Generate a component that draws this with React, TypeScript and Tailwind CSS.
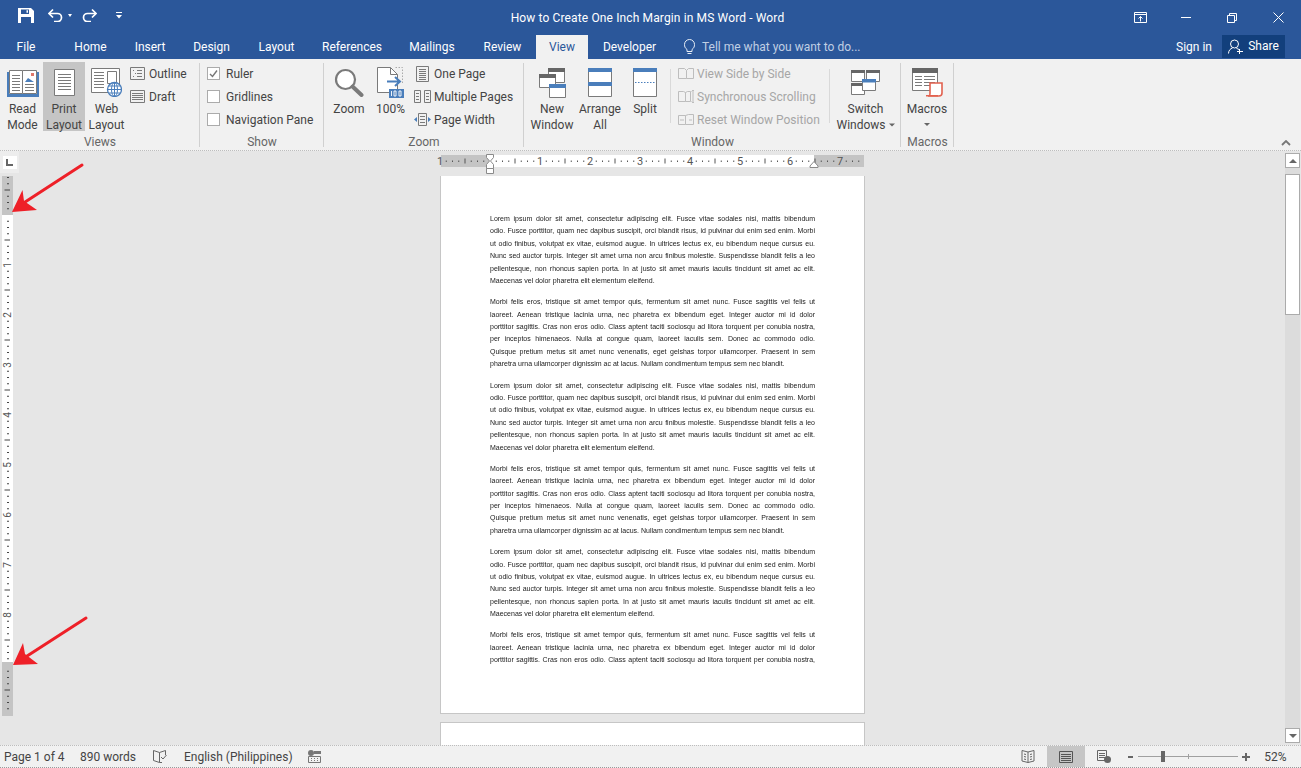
import React from 'react';

const GRAY = '#7a7a7a';
const BLUE = '#4a7ebb';

const LOREM = [
  'Lorem ipsum dolor sit amet, consectetur adipiscing elit. Fusce vitae sodales nisi, mattis bibendum',
  'odio. Fusce porttitor, quam nec dapibus suscipit, orci blandit risus, id pulvinar dui enim sed enim. Morbi',
  'ut odio finibus, volutpat ex vitae, euismod augue. In ultrices lectus ex, eu bibendum neque cursus eu.',
  'Nunc sed auctor turpis. Integer sit amet urna non arcu finibus molestie. Suspendisse blandit felis a leo',
  'pellentesque, non rhoncus sapien porta. In at justo sit amet mauris iaculis tincidunt sit amet ac elit.',
  'Maecenas vel dolor pharetra elit elementum eleifend.',
];
const MORBI = [
  'Morbi felis eros, tristique sit amet tempor quis, fermentum sit amet nunc. Fusce sagittis vel felis ut',
  'laoreet. Aenean tristique lacinia urna, nec pharetra ex bibendum eget. Integer auctor mi id dolor',
  'porttitor sagittis. Cras non eros odio. Class aptent taciti sociosqu ad litora torquent per conubia nostra,',
  'per inceptos himenaeos. Nulla at congue quam, laoreet iaculis sem. Donec ac commodo odio.',
  'Quisque pretium metus sit amet nunc venenatis, eget gelshas torpor ullamcorper. Praesent in sem',
  'pharetra urna ullamcorper dignissim ac at lacus. Nullam condimentum tempus sem nec blandit.',
];

const TABS = [
  { label: 'Home', w: 'w-[61px]' },
  { label: 'Insert', w: 'w-[58px]' },
  { label: 'Design', w: 'w-[65px]' },
  { label: 'Layout', w: 'w-[65px]' },
  { label: 'References', w: 'w-[86px]' },
  { label: 'Mailings', w: 'w-[74px]' },
  { label: 'Review', w: 'w-[67px]' },
];

const Ico: React.FC<{ w: number; h: number; children: React.ReactNode }> = ({ w, h, children }) => (
  <svg width={w} height={h} viewBox={`0 0 ${w} ${h}`} fill="none" className="shrink-0">
    {children}
  </svg>
);

const Lines: React.FC<{ x1: number; x2: number; ys: number[]; c?: string }> = ({ x1, x2, ys, c = GRAY }) => (
  <>
    {ys.map((y) => (
      <path key={y} d={`M${x1} ${y + 0.5}H${x2}`} stroke={c} />
    ))}
  </>
);

const BigButton: React.FC<{ lines: string[]; w: string; icon: React.ReactNode; active?: boolean; caret?: boolean }> = ({
  lines,
  w,
  icon,
  active,
  caret,
}) => (
  <div className={`flex flex-col items-center h-[69px] shrink-0 ${w} ${active ? 'bg-[#c5c5c5]' : ''}`}>
    <div className="h-[38px] shrink-0 flex items-center justify-center pt-[3px]">{icon}</div>
    {lines.map((l) => (
      <div key={l} className="h-[16px] shrink-0 leading-[16px] whitespace-nowrap translate-y-[0.5px]">
        {l}
      </div>
    ))}
    {caret && (
      <div className="h-[16px] shrink-0 flex items-center">
        <div className="border-x-[3px] border-x-transparent border-t-[3px] border-t-[#666]" />
      </div>
    )}
  </div>
);

const SmallItem: React.FC<{ icon: React.ReactNode; label: string; iconW: string; disabled?: boolean }> = ({
  icon,
  label,
  iconW,
  disabled,
}) => (
  <div className={`h-[23px] flex items-center whitespace-nowrap ${disabled ? 'text-[#a6a6a6]' : ''}`}>
    <div className={`flex justify-start shrink-0 ${iconW}`}>{icon}</div>
    <span>{label}</span>
  </div>
);

const Check: React.FC<{ label: string; on?: boolean }> = ({ label, on }) => (
  <div className="h-[23px] flex items-center gap-[6px] whitespace-nowrap">
    <div className="w-[13px] h-[13px] border border-[#ababab] bg-white flex items-center justify-center">
      {on && (
        <Ico w={9} h={9}>
          <path d="M1 5l2.5 2.5L8 1.5" stroke="#777" strokeWidth="1.4" />
        </Ico>
      )}
    </div>
    <span>{label}</span>
  </div>
);

const Group: React.FC<{ label: string; w: string; children: React.ReactNode }> = ({ label, w, children }) => (
  <div className={`relative shrink-0 h-full flex flex-col ${w}`}>
    <div className="flex h-[76px] pt-[3px]">{children}</div>
    <div className="h-[15px] leading-[15px] text-center text-[#666]">{label}</div>
    <div className="absolute right-0 top-[4px] h-[84px] w-px bg-[#d0d0d0]" />
  </div>
);

const Sep = () => <div className="w-px h-[54px] mt-[7px] bg-[#d9d9d9] shrink-0" />;

const ReadIcon = () => (
  <Ico w={32} h={28}>
    <path d="M0 3h2v22h28V3h2v25H0z" fill={BLUE} />
    <path d="M2.5 1.5h13v23h-13zM15.5 1.5l14 0v23h-14" fill="#fff" stroke={GRAY} />
    <Lines x1={5} x2={13} ys={[6, 9, 12, 15, 18, 21]} />
    <Lines x1={18} x2={27} ys={[15, 18, 21]} />
    <path d="M18 13l3-4 3 2 3 2z" fill={BLUE} />
    <path d="M24 4h3v3h-3z" fill="#e0776a" />
  </Ico>
);

const PrintIcon = () => (
  <Ico w={21} h={27}>
    <path d="M.5.5h20v26H.5z" fill="#fff" stroke={GRAY} />
    <Lines x1={4} x2={17} ys={[5, 8, 11, 14, 17, 20]} />
  </Ico>
);

const WebIcon = () => (
  <Ico w={31} h={29}>
    <path d="M.5.5h28v24H.5z" fill="#fff" stroke={GRAY} />
    <Lines x1={3} x2={13} ys={[4, 7, 10, 13, 16, 19]} />
    <path d="M16.5 3.5h9v12h-9z" stroke={GRAY} />
    <circle cx="23.5" cy="21.5" r="7" fill="#fff" stroke={BLUE} strokeWidth="1.3" />
    <path d="M16.5 21.5h14M23.5 14.5v14M18 18h11M18 25h11" stroke={BLUE} />
    <ellipse cx="23.5" cy="21.5" rx="3" ry="7" stroke={BLUE} />
  </Ico>
);

const OutlineIcon = () => (
  <Ico w={15} h={13}>
    <path d="M.5.5h14v12H.5z" stroke={GRAY} />
    <Lines x1={7} x2={12} ys={[3, 6, 9]} />
    <path d="M3 3.5h1M5 6.5h1M3 9.5h1" stroke={GRAY} />
  </Ico>
);

const DraftIcon = () => (
  <Ico w={15} h={13}>
    <path d="M.5.5h14v12H.5z" stroke={GRAY} />
    <Lines x1={2} x2={13} ys={[3, 5, 7, 9]} />
  </Ico>
);

const ZoomIcon = () => (
  <Ico w={30} h={29}>
    <circle cx="11.5" cy="11.5" r="9.5" stroke={GRAY} strokeWidth="2.2" fill="#fff" />
    <path d="M18.5 18.5L27.5 27" stroke={GRAY} strokeWidth="4" strokeLinecap="round" />
  </Ico>
);

const Zoom100Icon = () => (
  <Ico w={27} h={31}>
    <path d="M.5.5h13l7 7v18H.5z" fill="#fff" stroke={GRAY} />
    <path d="M13.5.5v7h7" stroke={GRAY} />
    <path d="M18.5.5h7v16" stroke="#aaa" strokeDasharray="1.5 1.5" />
    <path d="M10 14.5h13M18 10l5 4.5-5 4.5" stroke={BLUE} strokeWidth="2" />
    <path d="M12 22h15v9H12z" fill={BLUE} />
    <path d="M14.5 24v5M17 24h2v5h-2zM22 24h2v5h-2z" stroke="#fff" strokeWidth=".9" />
  </Ico>
);

const OnePageIcon = () => (
  <Ico w={13} h={16}>
    <path d="M.5.5h12v15H.5z" stroke={GRAY} />
    <Lines x1={3} x2={10} ys={[3, 5, 7, 9, 11, 13]} />
  </Ico>
);

const MultiPageIcon = () => (
  <Ico w={17} h={13}>
    <path d="M.5.5h6v12h-6zM10.5.5h6v12h-6z" stroke={GRAY} />
    <Lines x1={2} x2={5} ys={[3, 6, 9]} />
    <Lines x1={12} x2={15} ys={[3, 6, 9]} />
  </Ico>
);

const PageWidthIcon = () => (
  <Ico w={17} h={13}>
    <path d="M4.5.5h8v12h-8z" stroke={GRAY} />
    <Lines x1={6} x2={11} ys={[3, 6, 9]} />
    <path d="M0 6.5L3 4v5zM17 6.5L14 4v5z" fill={BLUE} />
  </Ico>
);

const NewWindowIcon = () => (
  <Ico w={27} h={31}>
    <path d="M9.5 1.5h16v14h-16z" fill="#fff" stroke={GRAY} />
    <path d="M9 1h17v4H9z" fill="#666" />
    <path d="M.5 7.5h16v13H.5z" fill="#fff" stroke={GRAY} />
    <path d="M0 7h17v4H0z" fill="#666" />
    <path d="M10.5 17.5h16v13h-16z" fill="#fff" stroke={GRAY} />
    <path d="M10 17h17v4H10z" fill={BLUE} />
  </Ico>
);

const ArrangeIcon = () => (
  <Ico w={24} h={29}>
    <path d="M.5.5h23v28H.5z" fill="#fff" stroke={GRAY} />
    <path d="M0 0h24v4H0zM0 14h24v4H0z" fill={BLUE} />
  </Ico>
);

const SplitIcon = () => (
  <Ico w={24} h={29}>
    <path d="M.5.5h23v28H.5z" fill="#fff" stroke={GRAY} />
    <path d="M0 0h24v4H0z" fill={BLUE} />
    <path d="M2 14.5h20" stroke={BLUE} strokeDasharray="1.5 1.5" />
  </Ico>
);

const SideBySideIcon = () => (
  <Ico w={16} h={11}>
    <path d="M.5.5h6l2 2v8h-8zM8.5 2.5l2-2h5v10h-7" stroke="#bdbdbd" />
  </Ico>
);

const SyncIcon = () => (
  <Ico w={16} h={15}>
    <path d="M.5 2.5h5l2 1v9h-7zM7.5 3.5l2-1h3v10h-5" stroke="#bdbdbd" />
    <path d="M15 1v13M13.5 2.5L15 1l1.5 1.5M13.5 12.5L15 14l1.5-1.5" stroke="#bdbdbd" />
  </Ico>
);

const ResetIcon = () => (
  <Ico w={16} h={12}>
    <path d="M.5 1.5h7v9h-7zM7.5 1.5l3-1h5v10h-8" stroke="#bdbdbd" />
    <path d="M2 6h4M11 6h3" stroke="#bdbdbd" />
  </Ico>
);

const SwitchIcon = () => (
  <Ico w={29} h={25}>
    <path d="M.5.5h13v11H.5zM15.5.5h13v11h-13zM.5 13.5h13v11H.5z" fill="#fff" stroke={GRAY} />
    <path d="M0 0h14v3H0zM15 0h14v3H15zM0 13h14v3H0z" fill="#666" />
    <path d="M11.5 9.5h13v11h-13z" fill="#fff" stroke={GRAY} />
    <path d="M11 9h14v3.5H11z" fill={BLUE} />
  </Ico>
);

const MacrosIcon = () => (
  <Ico w={31} h={29}>
    <path d="M.5.5h25v22H.5z" fill="#fff" stroke={GRAY} />
    <path d="M0 0h26v5H0z" fill="#666" />
    <Lines x1={3} x2={10} ys={[8, 11, 14, 17]} />
    <Lines x1={12} x2={23} ys={[8, 11, 14, 17]} />
    <path d="M18 15h12v10c0 2-1 3-3 3h-11c2 0 2-1 2-3z" fill="#fff" stroke="#e2614f" strokeWidth="1.6" />
    <path d="M14 27h12v1.5H14z" fill="#e2614f" />
  </Ico>
);

const HRuler = () => {
  // one inch = 50px, 0 sits at x=49 inside the page column
  const ticks: number[] = [];
  for (let i = -7; i <= 60; i++) ticks.push(i);
  const labels = [
    [-1, 1],
    [1, 1],
    [2, 2],
    [3, 3],
    [4, 4],
    [5, 5],
    [6, 6],
    [7, 7],
  ];
  return (
    <svg width="429" height="24" viewBox="0 0 429 24" className="overflow-visible ml-[1px]">
      <path d="M0 4h49v12H0zM373 4h50v12h-50z" fill="#c4c4c4" />
      <path d="M49 4h324v12H49z" fill="#fff" />
      {ticks.map((i) => {
        if (i % 8 === 0) return null;
        const x = 49 + i * 6.25;
        if (x < 2 || x > 421) return null;
        const half = i % 4 === 0;
        return <path key={i} d={`M${x} ${half ? 7.5 : 9.5}v${half ? 5 : 1.5}`} stroke="#555" strokeWidth="1" />;
      })}
      {labels.map(([n, label]) => (
        <text key={n} x={49 + n * 50} y="13.5" textAnchor="middle" fontSize="11" fill="#555">
          {label}
        </text>
      ))}
      <path d="M45.5 3.5h7v3l-3 3.5 3 3.5v4h-7v-4l3-3.5-3-3.5z" fill="#fff" stroke="#8a8a8a" />
      <path d="M45.5 17.5h7v5h-7z" fill="#fff" stroke="#8a8a8a" />
      <path d="M373 10.5l4 4.5v1.5h-8V15z" fill="#fff" stroke="#8a8a8a" />
    </svg>
  );
};

const VRuler = () => {
  const ticks: number[] = [];
  for (let i = -6; i <= 80; i++) ticks.push(i);
  return (
    <svg width="11" height="540" viewBox="0 0 11 540">
      <path d="M0 0h11v540H0z" fill="#c4c4c4" />
      <path d="M0 39h11v447H0z" fill="#fff" />
      {ticks.map((i) => {
        if (i % 8 === 0) return null;
        const y = 39 + i * 6.25;
        if (y < 1 || y > 538) return null;
        const half = i % 4 === 0;
        return <path key={i} d={`M${half ? 2.5 : 5} ${y}h${half ? 5.5 : 2}`} stroke="#444" />;
      })}
      {[1, 2, 3, 4, 5, 6, 7, 8].map((n) => (
        <text
          key={n}
          x="5.5"
          y={39 + n * 50}
          fontSize="10"
          fill="#555"
          textAnchor="middle"
          dominantBaseline="central"
          transform={`rotate(-90 5.5 ${39 + n * 50})`}
        >
          {n}
        </text>
      ))}
    </svg>
  );
};

const Para: React.FC<{ lines: string[]; cut?: boolean }> = ({ lines, cut }) => (
  <div className="mb-[8.95px]">
    {lines.map((l, i) => (
      <div
        key={i}
        className={
          i === lines.length - 1 && !cut
            ? 'h-[12.4px] leading-[12.4px]'
            : 'h-[12.4px] leading-[12.4px] text-justify [text-align-last:justify]'
        }
      >
        {l}
      </div>
    ))}
  </div>
);

const ScrollBtn: React.FC<{ up?: boolean }> = ({ up }) => (
  <div className="w-[15px] h-[15px] bg-white border border-[#ababab] flex items-center justify-center shrink-0">
    <div
      className={
        up
          ? 'border-x-[4px] border-x-transparent border-b-[4px] border-b-[#666]'
          : 'border-x-[4px] border-x-transparent border-t-[4px] border-t-[#666]'
      }
    />
  </div>
);

export default function App() {
  return (
    <div className="w-[1301px] h-[768px] overflow-hidden relative flex flex-col bg-[#e6e6e6] text-[#444] text-[12px] font-['Roboto','Noto_Sans',sans-serif]">
      {/* title bar */}
      <div className="h-[35px] bg-[#2b579a] text-white flex items-center shrink-0">
        <div className="w-[178px] flex items-center pl-[18px] pb-[5px]">
          <Ico w={16} h={15}>
            <path d="M0 0h13l3 3v12H0z" fill="#fff" />
            <path d="M3 1.5h8v4.5H3z" fill="#2b579a" />
            <path d="M3 9h10v6H3z" fill="#2b579a" />
            <path d="M8.5 2.3h1.5v2.5H8.5z" fill="#fff" />
          </Ico>
          <div className="w-[14px]" />
          <Ico w={15} h={14}>
            <path d="M1.5 5.5h8a4 4 0 010 8H6" stroke="#fff" strokeWidth="1.7" />
            <path d="M5 1.5l-4 4 4 4" stroke="#fff" strokeWidth="1.7" />
          </Ico>
          <div className="ml-[5px] border-x-[2.5px] border-x-transparent border-t-[3px] border-t-white" />
          <div className="w-[10px]" />
          <Ico w={15} h={14}>
            <path d="M13.5 5.5h-8a4 4 0 000 8H9" stroke="#fff" strokeWidth="1.7" />
            <path d="M10 1.5l4 4-4 4" stroke="#fff" strokeWidth="1.7" />
          </Ico>
          <div className="w-[19px]" />
          <Ico w={6} h={7}>
            <path d="M0 0h6v1H0z" fill="#fff" />
            <path d="M0 3h6L3 6.5z" fill="#fff" />
          </Ico>
        </div>
        <div className="flex-1 text-center whitespace-nowrap tracking-[0.13px]">How to Create One Inch Margin in MS Word - Word</div>
        <div className="w-[184px] flex h-full">
          <div className="w-[46px] flex items-center justify-center">
            <Ico w={13} h={11}>
              <path d="M.5.5h12v10H.5zM0 2.5h13" stroke="#fff" />
              <path d="M6.5 9.5V4.5M4.5 6.5l2-2 2 2" stroke="#fff" />
            </Ico>
          </div>
          <div className="w-[46px] flex items-center justify-center">
            <div className="w-[10px] h-px bg-white" />
          </div>
          <div className="w-[46px] flex items-center justify-center">
            <Ico w={10} h={10}>
              <path d="M.5 2.5h7v7h-7zM2.5 2.5v-2h7v7h-2" stroke="#fff" />
            </Ico>
          </div>
          <div className="w-[46px] flex items-center justify-center">
            <Ico w={11} h={11}>
              <path d="M.5.5l10 10M10.5.5l-10 10" stroke="#fff" />
            </Ico>
          </div>
        </div>
      </div>

      {/* tabs */}
      <div className="h-[24px] bg-[#2b579a] text-white flex shrink-0 leading-[25px]">
        <div className="w-[52px] text-center">File</div>
        <div className="w-[8px]" />
        {TABS.map((t) => (
          <div key={t.label} className={`text-center ${t.w}`}>
            {t.label}
          </div>
        ))}
        <div className="w-[52px] bg-[#f1f1f1] text-[#2b579a] text-center">View</div>
        <div className="w-[83px] text-center">Developer</div>
        <div className="flex items-center ml-[13px] text-[#c0cfe4]">
          <Ico w={11} h={16}>
            <path d="M3 10.5C1 9 .5 7.5.5 5.5a5 5 0 0110 0c0 2-.5 3.5-2.5 5v2H3zM3.5 14.5h4" stroke="#e8eef6" />
          </Ico>
          <span className="ml-[7px]">Tell me what you want to do...</span>
        </div>
        <div className="flex-1" />
        <div className="mr-[10px]">Sign in</div>
        <div className="w-[63px] h-[23px] mr-[16px] bg-[#123f7c] flex items-center justify-center gap-[5px]">
          <Ico w={15} h={15}>
            <circle cx="6.5" cy="5" r="4" stroke="#fff" />
            <path d="M.5 14.5c0-3 2-5 4-5.5M8.5 9.5c1 .2 2 .6 2.5 1M11.5 10v5M9 12.5h6" stroke="#fff" />
          </Ico>
          <span>Share</span>
        </div>
      </div>

      {/* ribbon */}
      <div className="h-[92px] bg-[#f1f1f1] flex shrink-0 relative border-b border-dotted border-[#bdbdbd]">
        <Group label="Views" w="w-[200px]">
          <div className="w-[2px]" />
          <BigButton lines={['Read', 'Mode']} w="w-[41px]" icon={<ReadIcon />} />
          <BigButton lines={['Print', 'Layout']} w="w-[42px]" icon={<PrintIcon />} active />
          <BigButton lines={['Web', 'Layout']} w="w-[43px]" icon={<WebIcon />} />
          <div className="flex flex-col ml-[2px]">
            <SmallItem icon={<OutlineIcon />} label="Outline" iconW="w-[19px]" />
            <SmallItem icon={<DraftIcon />} label="Draft" iconW="w-[19px]" />
          </div>
        </Group>
        <Group label="Show" w="w-[124px]">
          <div className="flex flex-col pl-[7px]">
            <Check label="Ruler" on />
            <Check label="Gridlines" />
            <Check label="Navigation Pane" />
          </div>
        </Group>
        <Group label="Zoom" w="w-[200px]">
          <div className="w-[2px]" />
          <BigButton lines={['Zoom']} w="w-[46px]" icon={<ZoomIcon />} />
          <BigButton lines={['100%']} w="w-[37px]" icon={<Zoom100Icon />} />
          <div className="flex flex-col ml-[5px]">
            <SmallItem icon={<div className="pl-[2px]"><OnePageIcon /></div>} label="One Page" iconW="w-[20px]" />
            <SmallItem icon={<MultiPageIcon />} label="Multiple Pages" iconW="w-[20px]" />
            <SmallItem icon={<PageWidthIcon />} label="Page Width" iconW="w-[20px]" />
          </div>
        </Group>
        <Group label="Window" w="w-[377px]">
          <div className="w-[4px]" />
          <BigButton lines={['New', 'Window']} w="w-[48px]" icon={<NewWindowIcon />} />
          <BigButton lines={['Arrange', 'All']} w="w-[48px]" icon={<ArrangeIcon />} />
          <BigButton lines={['Split']} w="w-[42px]" icon={<SplitIcon />} />
          <div className="w-[4px]" />
          <Sep />
          <div className="w-[158px] flex flex-col pl-[7px]">
            <SmallItem icon={<SideBySideIcon />} label="View Side by Side" iconW="w-[19px]" disabled />
            <SmallItem icon={<SyncIcon />} label="Synchronous Scrolling" iconW="w-[19px]" disabled />
            <SmallItem icon={<ResetIcon />} label="Reset Window Position" iconW="w-[19px]" disabled />
          </div>
          <Sep />
          <div className="flex flex-col items-center w-[71px]">
            <div className="h-[38px] shrink-0 flex items-center justify-center pt-[3px]">
              <SwitchIcon />
            </div>
            <div className="h-[16px] leading-[16px] translate-y-[0.5px]">Switch</div>
            <div className="h-[16px] leading-[16px] translate-y-[0.5px] flex items-center gap-[3px] whitespace-nowrap">
              Windows
              <div className="border-x-[3px] border-x-transparent border-t-[3px] border-t-[#666]" />
            </div>
          </div>
        </Group>
        <Group label="Macros" w="w-[53px]">
          <BigButton lines={['Macros']} w="w-[52px]" icon={<MacrosIcon />} caret />
        </Group>
        <div className="flex-1 flex items-end justify-end pr-[10px] pb-[4px]">
          <Ico w={10} h={6}>
            <path d="M1 5l4-4 4 4" stroke="#777" strokeWidth="1.8" />
          </Ico>
        </div>
      </div>

      {/* document area */}
      <div className="flex-1 min-h-0 flex">
        <div className="w-[20px] shrink-0 flex flex-col pl-[2px]">
          <div className="h-[25px] shrink-0 flex items-start">
            <div className="w-[19px] h-[22px] -ml-[2px] bg-[#ededed] flex items-center justify-center">
              <div className="w-[14px] h-[13px] bg-white flex items-center justify-center">
                <Ico w={7} h={7}>
                  <path d="M0 0h2v5h5v2H0z" fill="#666" />
                </Ico>
              </div>
            </div>
          </div>
          <VRuler />
        </div>
        <div className="flex-1 min-w-0 flex flex-col items-center overflow-hidden">
          <div className="w-[425px] h-[25px] shrink-0">
            <HRuler />
          </div>
          <div className="w-[425px] h-[538px] shrink-0 bg-white border border-[#c6c6c6] border-t-0 pl-[49px] pr-[49px] pt-[37px] text-[#1a1a1a] text-[7px] font-['Liberation_Sans',Arial,sans-serif] [will-change:transform]">
            <Para lines={LOREM} />
            <Para lines={MORBI} />
            <Para lines={LOREM} />
            <Para lines={MORBI} />
            <Para lines={LOREM} />
            <Para lines={MORBI.slice(0, 3)} cut />
          </div>
          <div className="w-[425px] h-[100px] mt-[8px] shrink-0 bg-white border border-[#c6c6c6]" />
        </div>
        <div className="w-[16px] shrink-0 flex flex-col pt-[2px] pr-px bg-[#e6e6e6]">
          <ScrollBtn up />
          <div className="flex-1 bg-[#dcdcdc] pt-[6px]">
            <div className="h-[141px] bg-white border border-[#ababab]" />
          </div>
          <ScrollBtn />
          <div className="h-[2px]" />
        </div>
      </div>

      {/* status bar */}
      <div className="h-[23px] shrink-0 bg-[#f1f1f1] border-t border-dotted border-[#bdbdbd] border-b-[1px] border-b-[#9a9a9a] flex items-center pl-[4px]">
        <span className="whitespace-nowrap w-[76px]">Page 1 of 4</span>
        <span className="whitespace-nowrap w-[73px]">890 words</span>
        <div className="w-[31px]">
          <Ico w={14} h={13}>
            <path d="M6.5 12.5l-6-2V.5l6 2zM6.5 2.5l6-2V5M6.5 12.5H9" stroke="#666" />
            <path d="M8 7l2 2 3.5-4" stroke="#666" />
          </Ico>
        </div>
        <span className="whitespace-nowrap w-[124px]">English (Philippines)</span>
        <Ico w={13} h={13}>
          <circle cx="3" cy="3" r="3" fill="#777" />
          <path d="M6 1h7v3H6z" fill="#777" />
          <path d="M.5 6.5h12v6H.5z" stroke="#777" />
          <path d="M3 8.5h1M6 8.5h1M9 8.5h1M3 10.5h1M6 10.5h1M9 10.5h1" stroke="#777" />
        </Ico>
        <div className="flex-1" />
        <Ico w={14} h={13}>
          <path d="M7 12.5l-6-1.5V.5l6 1.5 6-1.5V11zM7 2v10.5" stroke="#666" />
          <path d="M3 4l2 .5M3 6.5l2 .5M3 9l2 .5M9 4.5l2-.5M9 7l2-.5M9 9.5l2-.5" stroke="#666" />
        </Ico>
        <div className="w-[38px] h-[21px] ml-[12px] bg-[#c6c6c6] flex items-center justify-center">
          <Ico w={14} h={12}>
            <path d="M.5.5h13v11H.5z" stroke="#555" />
            <Lines x1={2} x2={12} ys={[3, 5, 7, 9]} c="#555" />
          </Ico>
        </div>
        <div className="ml-[12px]">
          <Ico w={14} h={13}>
            <path d="M.5.5h9v10H.5z" stroke="#666" />
            <Lines x1={2} x2={8} ys={[3, 5, 7]} c="#666" />
            <circle cx="10.5" cy="9.5" r="3.5" fill="#666" />
          </Ico>
        </div>
        <div className="ml-[17px] w-[5px] h-[2px] bg-[#666]" />
        <div className="ml-[5px] w-[100px] h-px bg-[#a0a0a0] relative">
          <div className="absolute left-[23px] -top-[5px] w-[4px] h-[11px] bg-[#666]" />
          <div className="absolute left-[50px] -top-[2px] w-px h-[5px] bg-[#a0a0a0]" />
        </div>
        <div className="ml-[4px]">
          <Ico w={8} h={8}>
            <path d="M0 3h8v2H0zM3 0h2v8H3z" fill="#666" />
          </Ico>
        </div>
        <span className="w-[51px] text-center">52%</span>
      </div>

      {/* red annotation arrows */}
      <svg width="100" height="570" viewBox="0 0 100 570" className="absolute left-0 top-[150px] pointer-events-none">
        <path d="M82 15L22 54" stroke="#ee2028" strokeWidth="3" strokeLinecap="round" />
        <path d="M12 62L22.5 40 24 51 37 60z" fill="#ee2028" />
        <path d="M86 468L24 508" stroke="#ee2028" strokeWidth="3" strokeLinecap="round" />
        <path d="M13 515L23 493 25 504 38 514z" fill="#ee2028" />
      </svg>
    </div>
  );
}
